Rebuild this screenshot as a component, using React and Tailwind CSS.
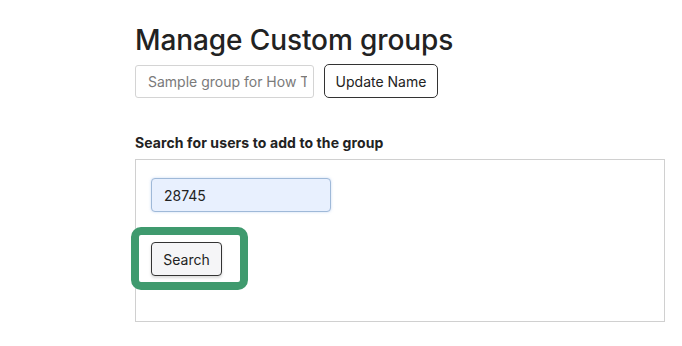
export default function App() {
  return (
    <div className="min-h-[346px] w-[682px] bg-white text-[#212529]" style={{ fontFamily: 'Inter, "Noto Sans", sans-serif' }}>
      <div className="pl-[135px] pr-[18px] pt-[22px]">
        <h1 className="text-[28px] font-medium leading-[36px] tracking-[-0.1px] text-[#222]">Manage Custom groups</h1>
        <div className="mt-[6px] flex items-center gap-[10px]">
          <input
            type="text"
            placeholder="Sample group for How To"
            className="h-[33px] w-[179px] rounded-[3px] border border-[#d4d4d4] pl-[12px] pr-[6px] text-[14px] text-[#333] placeholder:text-[#7a7a7a] outline-none"
          />
          <button className="h-[34px] w-[114px] rounded-[5px] border border-[#333] bg-white text-[14px] text-[#222]">
            Update Name
          </button>
        </div>
        <p className="mt-[36px] text-[14px] font-bold leading-[18px] tracking-[0.1px] text-[#222]">Search for users to add to the group</p>
        <div className="mt-[7px] h-[163px] w-[530px] border border-[#d0d0d0] pl-[15px] pt-[18px]">
          <input
            type="text"
            defaultValue="28745"
            className="h-[34px] w-[180px] rounded-[4px] border border-[#9fb9d8] bg-[#e8f0fe] px-[12px] text-[14px] text-[#222] outline-none shadow-[0_0_3px_rgba(100,150,220,0.35)]"
          />
          <div className="relative mt-[30px] w-fit">
            <button className="h-[34px] w-[71px] rounded-[4px] border border-[#333] bg-[#f5f5f7] text-[14px] text-[#222] shadow-[0_2px_3px_rgba(0,0,0,0.15)]">
              Search
            </button>
            <div className="pointer-events-none absolute left-[-20px] top-[-15px] h-[63px] w-[117px] rounded-[10px] border-[8px] border-[#3f9a6e]" />
          </div>
        </div>
      </div>
    </div>
  );
}
